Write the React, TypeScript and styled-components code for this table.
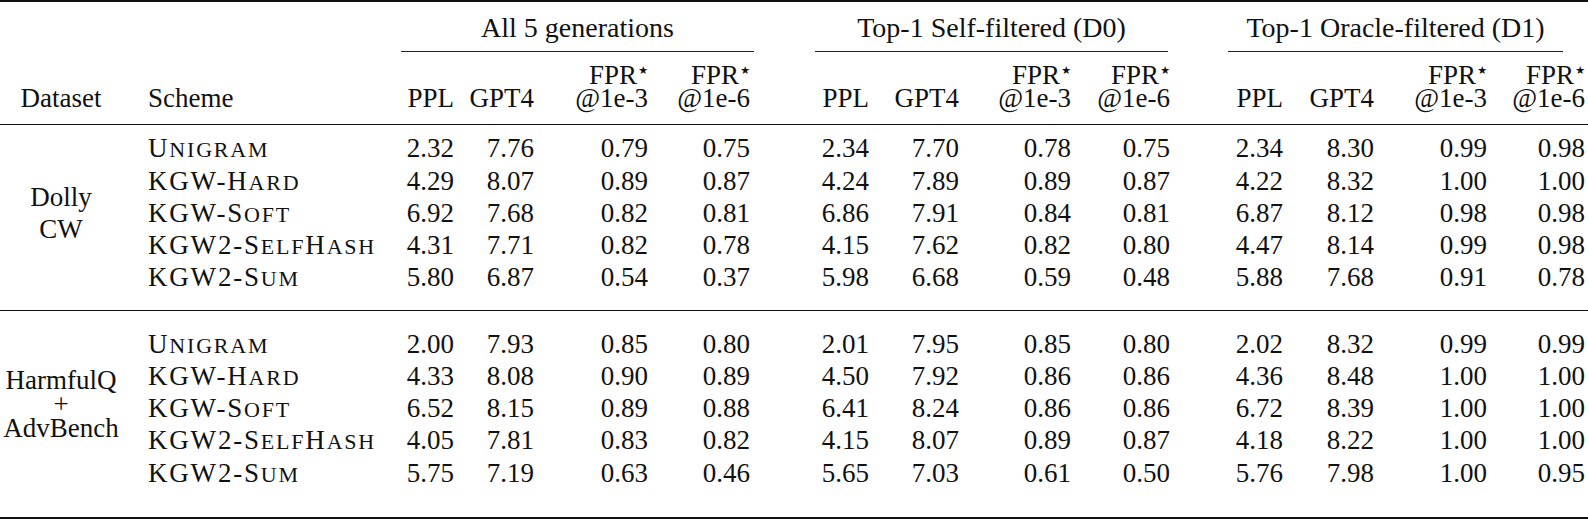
import React from 'react'
import styled, {createGlobalStyle} from 'styled-components'

const GlobalStyle = createGlobalStyle`
  body {
    margin: 0;
    background: #ffffff;
  }
`

// column tracks: dataset, scheme, 3 groups x 4 metrics, trailing gutter
const COLUMNS =
  '122px 258px 74px 80px 114px 102px 119px 90px 112px 99px 113px 91px 113px 98px 3px'

type Section = {
  label: string[]
  pitch: number
  lift: number
  rows: [string, string][]
}

const sections: Section[] = [
  {
    label: ['Dolly', 'CW'],
    pitch: 32.4,
    lift: 0,
    rows: [
      ['Unigram', '2.32 7.76 0.79 0.75 2.34 7.70 0.78 0.75 2.34 8.30 0.99 0.98'],
      ['KGW-Hard', '4.29 8.07 0.89 0.87 4.24 7.89 0.89 0.87 4.22 8.32 1.00 1.00'],
      ['KGW-Soft', '6.92 7.68 0.82 0.81 6.86 7.91 0.84 0.81 6.87 8.12 0.98 0.98'],
      ['KGW2-SelfHash', '4.31 7.71 0.82 0.78 4.15 7.62 0.82 0.80 4.47 8.14 0.99 0.98'],
      ['KGW2-Sum', '5.80 6.87 0.54 0.37 5.98 6.68 0.59 0.48 5.88 7.68 0.91 0.78'],
    ],
  },
  {
    label: ['HarmfulQ', '+', 'AdvBench'],
    pitch: 24,
    lift: 10,
    rows: [
      ['Unigram', '2.00 7.93 0.85 0.80 2.01 7.95 0.85 0.80 2.02 8.32 0.99 0.99'],
      ['KGW-Hard', '4.33 8.08 0.90 0.89 4.50 7.92 0.86 0.86 4.36 8.48 1.00 1.00'],
      ['KGW-Soft', '6.52 8.15 0.89 0.88 6.41 8.24 0.86 0.86 6.72 8.39 1.00 1.00'],
      ['KGW2-SelfHash', '4.05 7.81 0.83 0.82 4.15 8.07 0.89 0.87 4.18 8.22 1.00 1.00'],
      ['KGW2-Sum', '5.75 7.19 0.63 0.46 5.65 7.03 0.61 0.50 5.76 7.98 1.00 0.95'],
    ],
  },
]

const groups = [
  {title: 'All 5 generations', left: 21, right: 0},
  {title: 'Top-1 Self-filtered (D0)', left: 61, right: 0},
  {title: 'Top-1 Oracle-filtered (D1)', left: 60, right: 18},
]

// lowercase runs are typeset as small capitals
const SmallCaps: React.FC<{text: string}> = ({text}) => {
  const parts = text.split(/([a-z]+)/).filter(Boolean)
  return (
    <>
      {parts.map((p, i) =>
        /^[a-z]+$/.test(p) ? <Small key={i}>{p.toUpperCase()}</Small> : <span key={i}>{p}</span>
      )}
    </>
  )
}

const Fpr: React.FC<{at: string}> = ({at}) => (
  <Stack>
    <span>
      FPR<Star>★</Star>
    </span>
    <span>{at}</span>
  </Stack>
)

const metricHeads = () =>
  groups.flatMap((g, gi) => [
    <HeadCell key={gi + 'a'}>PPL</HeadCell>,
    <HeadCell key={gi + 'b'}>GPT4</HeadCell>,
    <HeadCell key={gi + 'c'}>
      <Fpr at="@1e-3" />
    </HeadCell>,
    <HeadCell key={gi + 'd'}>
      <Fpr at="@1e-6" />
    </HeadCell>,
  ])

const App: React.FC = () => {
  return (
    <Page>
      <GlobalStyle />
      <Rule thickness={2} />
      <GroupRow>
        <Spacer />
        {groups.map((g) => (
          <GroupCell key={g.title} left={g.left} right={g.right}>
            {g.title}
          </GroupCell>
        ))}
      </GroupRow>
      <HeadRow>
        <HeadCell align="center">Dataset</HeadCell>
        <HeadCell align="left" indent={26}>
          Scheme
        </HeadCell>
        {metricHeads()}
      </HeadRow>
      <Rule thickness={1} />
      {sections.map((s, si) => (
        <React.Fragment key={si}>
          {si > 0 && <Rule thickness={1.5} />}
          <Body top={si === 0 ? 8 : 17} bottom={si === 0 ? 16 : 28}>
            <DatasetCell pitch={s.pitch} lift={s.lift}>
              {s.label.map((l) => (
                <span key={l}>{l}</span>
              ))}
            </DatasetCell>
            {s.rows.map(([scheme, values]) => (
              <React.Fragment key={scheme}>
                <SchemeCell>
                  <SmallCaps text={scheme} />
                </SchemeCell>
                {values.split(' ').map((v, vi) => (
                  <NumCell key={vi}>{v}</NumCell>
                ))}
              </React.Fragment>
            ))}
          </Body>
        </React.Fragment>
      ))}
      <Rule thickness={2} />
    </Page>
  )
}
export default App

const Page = styled.div`
  width: 1588px;
  font-family: 'Liberation Serif', 'Times New Roman', serif;
  font-size: 27px;
  color: #111;
`

const Rule = styled.div<{thickness: number}>`
  height: ${(p) => p.thickness}px;
  background: #111;
`

const GroupRow = styled.div`
  display: grid;
  grid-template-columns: 380px 374px 414px 413px 7px;
  padding-top: 10px;
`

const Spacer = styled.div``

const GroupCell = styled.div<{left: number; right: number}>`
  margin-left: ${(p) => p.left}px;
  margin-right: ${(p) => p.right}px;
  padding-bottom: 7px;
  border-bottom: 1px solid #222;
  font-size: 28px;
  line-height: 32px;
  text-align: center;
  white-space: nowrap;
`

const HeadRow = styled.div`
  display: grid;
  grid-template-columns: ${COLUMNS};
  align-items: end;
  padding: 12px 0 13px;
`

const HeadCell = styled.div<{align?: string; indent?: number}>`
  text-align: ${(p) => p.align || 'right'};
  padding-left: ${(p) => p.indent || 0}px;
  line-height: 23.4px;
  white-space: nowrap;
`

const Stack = styled.div`
  display: flex;
  flex-direction: column;
  align-items: flex-end;
`

const Star = styled.span`
  position: relative;
  top: -10px;
  margin-left: 1px;
  font-family: 'DejaVu Sans', sans-serif;
  font-size: 11px;
  line-height: 0;
`

const Body = styled.div<{top: number; bottom: number}>`
  display: grid;
  grid-template-columns: ${COLUMNS};
  grid-auto-rows: 32.2px;
  align-items: center;
  padding-top: ${(p) => p.top}px;
  padding-bottom: ${(p) => p.bottom}px;
`

const DatasetCell = styled.div<{pitch: number; lift: number}>`
  grid-column: 1;
  grid-row: 1 / span 5;
  display: flex;
  flex-direction: column;
  align-items: center;
  justify-content: center;
  padding-bottom: ${(p) => p.lift}px;
  line-height: ${(p) => p.pitch}px;
`

const SchemeCell = styled.div`
  grid-column: 2;
  padding-left: 26px;
  letter-spacing: 1.8px;
  white-space: nowrap;
`

const Small = styled.span`
  font-size: 22px;
`

const NumCell = styled.div`
  text-align: right;
  white-space: nowrap;
`
